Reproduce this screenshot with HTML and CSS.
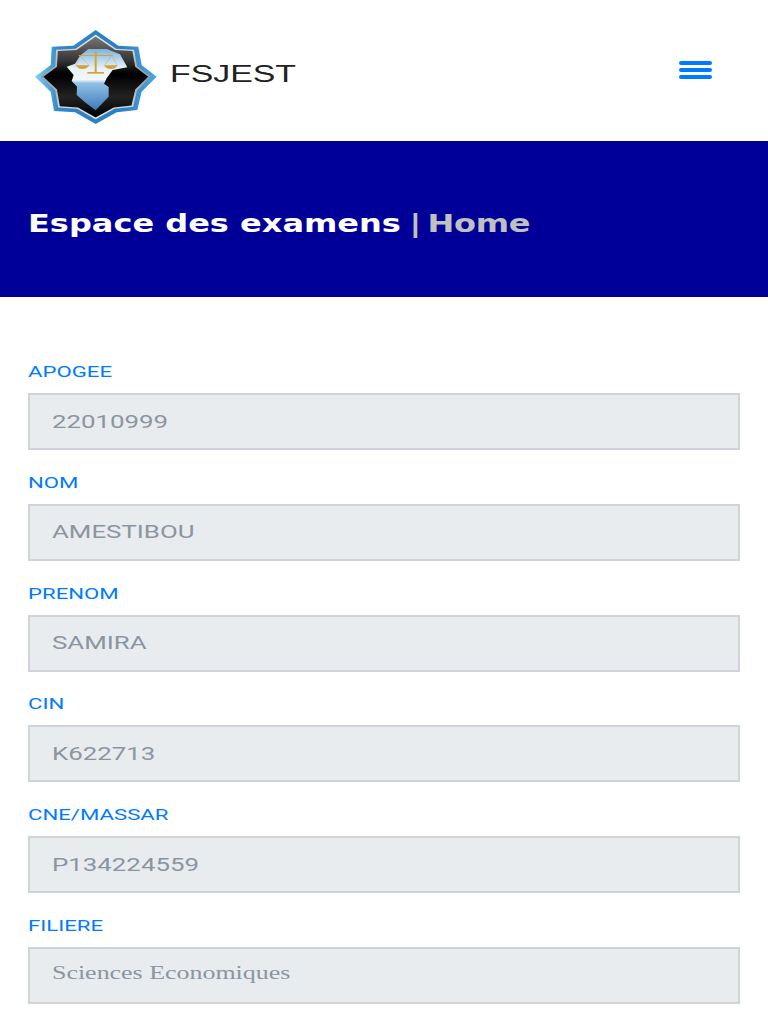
FILE: index.html
```html
<!DOCTYPE html>
<html lang="fr">
<head>
<meta charset="utf-8">
<title>Espace des examens</title>
<link rel="stylesheet" href="styles.css">
</head>
<body>
<header class="topbar">
  <a class="brand" href="#">
    <svg class="logo" viewBox="0 0 390 300" aria-hidden="true">
      <defs>
        <linearGradient id="rim" x1="0" y1="0.5" x2="1" y2="0.5">
          <stop offset="0" stop-color="#7fd0f2"/><stop offset=".2" stop-color="#2f86c8"/><stop offset=".7" stop-color="#2a7fc2"/><stop offset="1" stop-color="#4fa6dc"/>
        </linearGradient>
        <linearGradient id="metal" x1="0" y1="0" x2="0" y2="1">
          <stop offset="0" stop-color="#f0f0f0"/><stop offset=".5" stop-color="#999"/><stop offset="1" stop-color="#eee"/>
        </linearGradient>
        <linearGradient id="dark" x1="0" y1="0" x2="0" y2="1">
          <stop offset="0" stop-color="#777"/><stop offset=".3" stop-color="#333"/><stop offset=".46" stop-color="#000"/><stop offset=".75" stop-color="#222"/><stop offset="1" stop-color="#000"/>
        </linearGradient>
        <linearGradient id="sky" x1="0" y1="0" x2="0" y2="1">
          <stop offset="0" stop-color="#7db4de"/><stop offset=".32" stop-color="#e8f2f8"/><stop offset=".5" stop-color="#f2f6f9"/><stop offset=".56" stop-color="#8fc0e6"/><stop offset="1" stop-color="#3f79b8"/>
        </linearGradient>
        <polygon id="star" points="197,15 265,62 325,65 335,120 380,155 335,200 322,255 260,262 197,297 135,262 72,258 62,200 15,155 62,120 65,65 130,62"/>
      </defs>
      <use href="#star" fill="url(#rim)"/>
      <use href="#star" fill="url(#metal)" transform="translate(197 156) scale(.9) translate(-197 -156)"/>
      <use href="#star" fill="url(#dark)" transform="translate(197 156) scale(.86) translate(-197 -156)"/>
      <path d="M150 92 L175 72 L230 72 L270 88 L292 127 L248 135 L230 160 L222 176 L236 186 L236 215 L197 256 L165 232 L140 210 L141 185 L125 168 L131 150 L110 125 L135 116 Z" fill="url(#sky)"/>
      <g fill="#d6a233">
        <rect x="194" y="80" width="6" height="62"/>
        <rect x="146" y="90" width="102" height="3"/>
        <rect x="172" y="141" width="50" height="5"/>
        <path d="M137 121 H178 Q172 132 157 132 Q143 132 137 121 Z"/>
        <path d="M222 121 H263 Q257 132 242 132 Q228 132 222 121 Z"/>
      </g>
      <g stroke="#b58a3a" stroke-width="1" fill="none">
        <path d="M150 92 L138 121 M150 92 L177 121 M245 92 L223 121 M245 92 L262 121"/>
      </g>
    </svg>
    <span class="brand-name">FSJEST</span>
  </a>
  <button class="menu" type="button" aria-label="Menu">
    <span class="menu-bar"></span><span class="menu-bar"></span><span class="menu-bar"></span>
  </button>
</header>
<section class="banner">
  <h1 class="title"><span class="title-main">Espace des examens</span> <span class="title-sub">| Home</span></h1>
</section>
<main class="form">
  <div class="group"><div class="label"><span>APOGEE</span></div><div class="field"><span>22010999</span></div></div>
  <div class="group"><div class="label"><span>NOM</span></div><div class="field"><span>AMESTIBOU</span></div></div>
  <div class="group"><div class="label"><span>PRENOM</span></div><div class="field"><span>SAMIRA</span></div></div>
  <div class="group"><div class="label"><span>CIN</span></div><div class="field"><span>K622713</span></div></div>
  <div class="group"><div class="label"><span>CNE/MASSAR</span></div><div class="field"><span>P134224559</span></div></div>
  <div class="group"><div class="label"><span>FILIERE</span></div><div class="field field-select"><span>Sciences Economiques</span></div></div>
</main>
</body>
</html>
```
FILE: styles.css
```css
* { box-sizing: border-box; }
html, body { margin: 0; padding: 0; background: #fff; }
body { font-family: Roboto, "Liberation Sans", sans-serif; height: 1024px; overflow: hidden; }

.topbar { height: 141px; display: flex; align-items: center; justify-content: space-between; padding: 0 56px 0 30px; }
.brand { display: flex; align-items: center; text-decoration: none; height: 100px; margin-top: 8px; }
.logo { width: 130px; height: 100px; display: block; flex: none; }
.brand-name { display: inline-block; margin-left: 10px; font: 24px/30px "Liberation Sans", sans-serif; color: #212121; transform: scaleX(1.41); transform-origin: left center; margin-top: -2px; }
.menu { width: 33px; padding: 0; border: 0; background: none; display: flex; flex-direction: column; gap: 3px; margin-top: -2px; }
.menu-bar { display: block; height: 4px; border-radius: 2px; background: #007bff; width: 100%; }

.banner { height: 156px; background: #000099; padding: 66px 28px 0; }
.title { display: inline-block; margin: 0; font: bold 25.5px/32px "DejaVu Sans", sans-serif; white-space: nowrap; transform: scaleX(1.255); transform-origin: left center; }
.title-main { color: #fff; }
.title-sub { color: #c0c0c0; margin-left: -2px; word-spacing: -3.5px; letter-spacing: -.2px; }

.form { padding: 63px 28px 0; }
.group { height: 110.8px; }
.label { height: 33px; font-size: 15.5px; line-height: 24px; color: #007bff; }
.label span, .field span { display: inline-block; transform-origin: left center; }
.label span { transform: scaleX(1.43); }
.field { height: 57px; border: 2px solid #ced4da; background: #e9ecef; padding: 0 22px; display: flex; align-items: center; color: #8b95a1; font: 18px/1 Roboto, sans-serif; }
.field span { transform: scaleX(1.435); }
.field-select { font: 18px/1 "Liberation Serif", serif; padding-bottom: 4px; }
.field-select span { transform: scaleX(1.44); }
```
